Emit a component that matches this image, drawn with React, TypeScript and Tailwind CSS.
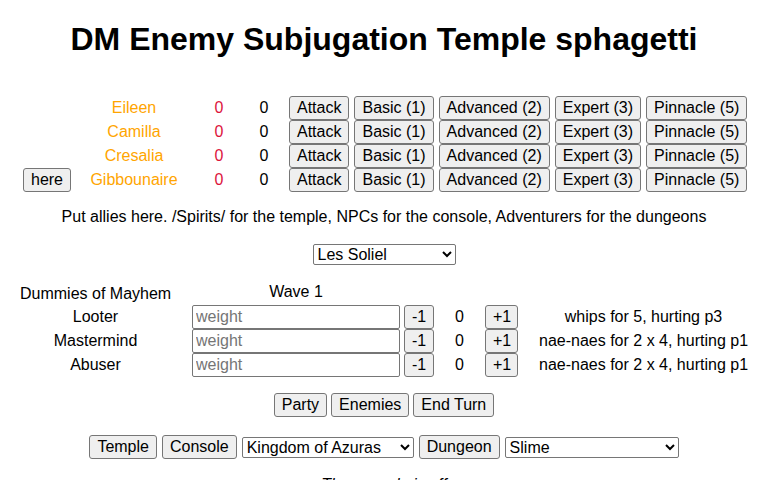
import React from "react";

const btn =
  "h-[24px] px-[7px] border border-[#767676] rounded-[3px] bg-[#efefef] text-black text-[16px] leading-[20px] whitespace-nowrap";
const sel =
  "h-[21px] border border-[#767676] rounded-[2px] bg-white text-black text-[16px] leading-[19px]";

const allies = ["Eileen", "Camilla", "Cresalia", "Gibbounaire"];
const enemies = [
  { name: "Looter", desc: "whips for 5, hurting p3" },
  { name: "Mastermind", desc: "nae-naes for 2 x 4, hurting p1" },
  { name: "Abuser", desc: "nae-naes for 2 x 4, hurting p1" },
];

export default function App() {
  return (
    <div className="w-[768px] h-[480px] overflow-hidden bg-white text-black font-['Liberation_Sans',Arial,sans-serif] text-[16px] leading-[18px]">
      <h1 className="pt-[21px] text-center text-[32px] leading-[37px] font-bold">
        DM Enemy Subjugation Temple sphagetti
      </h1>

      <div className="mt-[38px] mx-auto w-[728px] flex flex-col">
        {allies.map((a, i) => (
          <div key={a} className="flex items-center h-[24px]">
            <div className="w-[54px] flex justify-center">
              {i === 3 && <button className={btn}>here</button>}
            </div>
            <div className="w-[120px] text-center text-[#ffa500]">{a}</div>
            <div className="w-[50px] text-center text-[#dc143c]">0</div>
            <div className="w-[40px] text-center">0</div>
            <div className="ml-[5px] flex gap-[5px]">
              <button className={btn}>Attack</button>
              <button className={btn}>Basic (1)</button>
              <button className={btn}>Advanced (2)</button>
              <button className={btn}>Expert (3)</button>
              <button className={btn}>Pinnacle (5)</button>
            </div>
          </div>
        ))}
      </div>

      <p className="mt-[16px] text-center">
        Put allies here. /Spirits/ for the temple, NPCs for the console, Adventurers for the dungeons
      </p>

      <div className="mt-[18px] flex justify-center">
        <select className={`${sel} w-[143px]`} defaultValue="Les Soliel">
          <option>Les Soliel</option>
        </select>
      </div>

      <div className="mt-[16px] mx-auto w-[728px] flex flex-col">
        <div className="flex h-[24px]">
          <div className="w-[151px] text-center pt-[4px] whitespace-nowrap">Dummies of Mayhem</div>
          <div className="ml-[21px] w-[208px] text-center pt-[2px]">Wave 1</div>
        </div>
        {enemies.map((e) => (
          <div key={e.name} className="flex items-center h-[24px]">
            <div className="w-[151px] text-center">{e.name}</div>
            <input
              className="ml-[21px] w-[208px] h-[24px] border border-[#767676] rounded-[2px] px-[3px] bg-white placeholder:text-[#757575] outline-none"
              placeholder="weight"
            />
            <button className={`${btn} ml-[4px] w-[30px] px-0`}>-1</button>
            <div className="w-[51px] text-center">0</div>
            <button className={`${btn} w-[33px] px-0`}>+1</button>
            <div className="ml-[21px] w-[209px] text-center whitespace-nowrap">{e.desc}</div>
          </div>
        ))}
      </div>

      <div className="mt-[16px] flex justify-center gap-[4px]">
        <button className={btn}>Party</button>
        <button className={btn}>Enemies</button>
        <button className={btn}>End Turn</button>
      </div>

      <div className="mt-[18px] flex justify-center items-center gap-[5px]">
        <button className={btn}>Temple</button>
        <button className={btn}>Console</button>
        <select className={`${sel} w-[172px]`} defaultValue="Kingdom of Azuras">
          <option>Kingdom of Azuras</option>
        </select>
        <button className={btn}>Dungeon</button>
        <select className={`${sel} w-[174px]`} defaultValue="Slime">
          <option>Slime</option>
        </select>
      </div>

      <p className="mt-[17px] text-center italic">The console is off</p>
    </div>
  );
}
